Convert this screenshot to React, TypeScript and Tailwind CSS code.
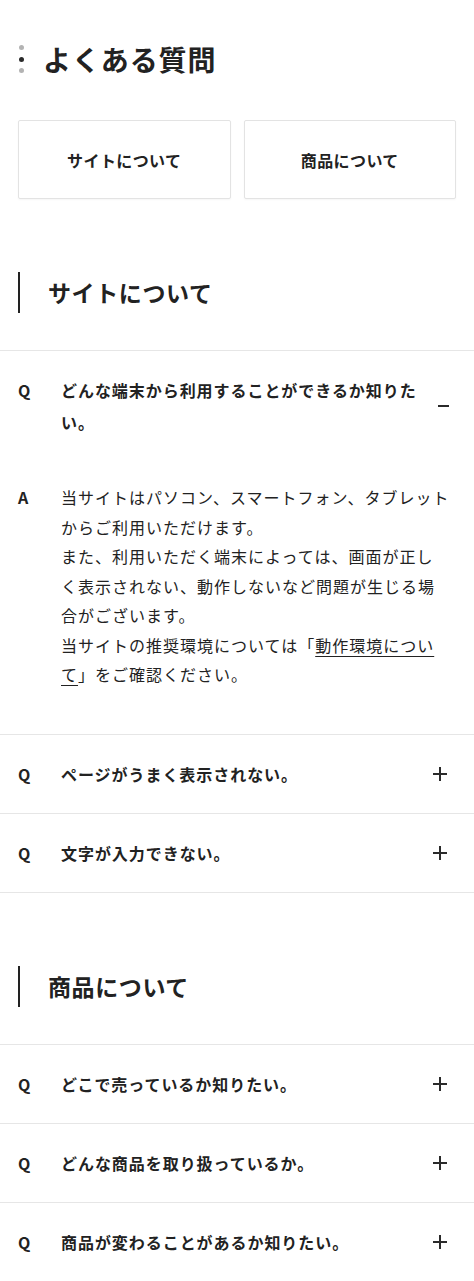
import { Fragment } from "react";

type Item = { q: string; open?: boolean };

const siteItems: Item[] = [
  { q: "どんな端末から利用することができるか知りたい。", open: true },
  { q: "ページがうまく表示されない。" },
  { q: "文字が入力できない。" },
];

const productItems: Item[] = [
  { q: "どこで売っているか知りたい。" },
  { q: "どんな商品を取り扱っているか。" },
  { q: "商品が変わることがあるか知りたい。" },
];

function PlusIcon() {
  return (
    <svg width="14" height="14" viewBox="0 0 14 14" fill="none">
      <path d="M7 0v14M0 7h14" stroke="#2a2a2a" strokeWidth="2" />
    </svg>
  );
}

function MinusIcon() {
  return (
    <svg width="11" height="2" viewBox="0 0 11 2" fill="none">
      <path d="M0 1h11" stroke="#2a2a2a" strokeWidth="2" />
    </svg>
  );
}

function Answer() {
  const lines = [
    "当サイトはパソコン、スマートフォン、タブレット",
    "からご利用いただけます。",
    "また、利用いただく端末によっては、画面が正し",
    "く表示されない、動作しないなど問題が生じる場",
    "合がございます。",
  ];
  return (
    <div className="flex px-[18px] pt-[22px] pb-[44px]">
      <span className="w-[43px] shrink-0 text-[16px] font-bold leading-[29.5px]">A</span>
      <p className="text-[16px] leading-[29.5px] tracking-[1px] text-[#222]">
        {lines.map((l) => (
          <Fragment key={l}>
            {l}
            <br />
          </Fragment>
        ))}
        当サイトの推奨環境については「<span className="underline underline-offset-[4px]">動作環境につい</span>
        <br />
        <span className="underline underline-offset-[4px]">て</span>」をご確認ください。
      </p>
    </div>
  );
}

function FaqRow({ item }: { item: Item }) {
  return (
    <div className="border-b border-[#e6e6e6]">
      <div className="flex items-start px-[18px] py-[23px]">
        <span className="w-[43px] shrink-0 text-[16px] font-bold leading-8">Q</span>
        <p className="w-[364px] shrink-0 text-[16px] font-bold leading-8 tracking-[0.95px] text-[#222]">
          {item.q}
        </p>
        <span className={`flex w-4 self-center ${item.open ? "ml-2 justify-end" : "ml-[8px] justify-start"}`}>
          {item.open ? <MinusIcon /> : <PlusIcon />}
        </span>
      </div>
      {item.open && <Answer />}
    </div>
  );
}

function Section({ title, items }: { title: string; items: Item[] }) {
  return (
    <section>
      <div className="flex h-[41px] items-center gap-[28px] px-[18px]">
        <span className="h-full w-[2px] bg-[#222]" />
        <h2 className="text-[23px] font-bold tracking-[0.6px] text-[#222]">{title}</h2>
      </div>
      <div className="mt-[37px] border-t border-[#e6e6e6]">
        {items.map((it) => (
          <FaqRow key={it.q} item={it} />
        ))}
      </div>
    </section>
  );
}

export default function App() {
  return (
    <div
      className="min-h-screen bg-white text-[#222]"
      style={{ fontFamily: '"Noto Sans CJK JP", "Noto Sans", sans-serif' }}
    >
      {/* TITLE */}
      <div className="flex items-center gap-[19px] px-[18px] pt-[39px]">
        <div className="flex flex-col gap-[6.5px] pl-[1px]">
          <span className="h-[5px] w-[5px] rounded-full bg-[#b3b3b3]" />
          <span className="h-[5px] w-[5px] rounded-full bg-[#2a2a2a]" />
          <span className="h-[5px] w-[5px] rounded-full bg-[#b3b3b3]" />
        </div>
        <h1 className="text-[28px] font-bold leading-10 tracking-[0.9px]">よくある質問</h1>
      </div>

      {/* TABS */}
      <div className="mt-[41px] grid grid-cols-2 gap-[13px] px-[18px]">
        {["サイトについて", "商品について"].map((t) => (
          <button
            key={t}
            className="flex h-[79px] items-center justify-center rounded-[2px] border border-[#e3e3e3] bg-white text-[16px] font-bold tracking-[0.4px] shadow-[0_1px_2px_rgba(0,0,0,0.04)]"
          >
            {t}
          </button>
        ))}
      </div>

      <div className="mt-[73px]">
        <Section title="サイトについて" items={siteItems} />
      </div>
      <div className="mt-[73px]">
        <Section title="商品について" items={productItems} />
      </div>
    </div>
  );
}
